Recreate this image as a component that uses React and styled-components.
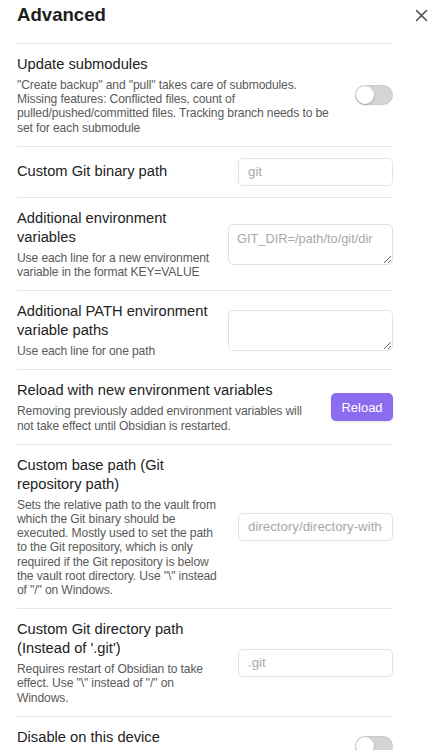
import styled, { createGlobalStyle } from "styled-components";

const GlobalStyle = createGlobalStyle`
  html, body {
    margin: 0;
    padding: 0;
    background: #ffffff;
  }
  body {
    font-family: "Liberation Sans", Arial, sans-serif;
    color: #222222;
    -webkit-font-smoothing: antialiased;
  }
`;

const Modal = styled.div`
  padding: 0 4px 0 17px;
`;

const Header = styled.header`
  display: flex;
  justify-content: space-between;
  align-items: center;
  height: 30px;
  margin-bottom: 13px;
`;

const Title = styled.h2`
  margin: 0;
  font-size: 18.6px;
  font-weight: 700;
  line-height: 30px;
  color: #1e1e1e;
`;

const CloseButton = styled.button`
  width: 20px;
  height: 20px;
  display: grid;
  place-items: center;
  border: 0;
  padding: 0;
  background: transparent;
  color: #4a4a4a;
`;

const Settings = styled.div`
  margin-right: 38px;
`;

const Item = styled.div`
  display: flex;
  align-items: center;
  gap: 16px;
  padding: 11px 0;
  border-top: 1px solid #e6e6e6;
`;

const Info = styled.div`
  flex: 1 1 0;
  min-width: 0;
`;

const Name = styled.div`
  font-size: 14.7px;
  line-height: 19px;
  color: #222222;
`;

const Description = styled.div`
  margin-top: 4px;
  font-size: 12.1px;
  line-height: 14.2px;
  letter-spacing: -0.12px;
  color: #5a5a5a;
`;

const Control = styled.div`
  flex: none;
  display: flex;
  justify-content: flex-end;
`;

const TextInput = styled.input`
  box-sizing: border-box;
  width: 155px;
  height: 28px;
  padding: 0 9px;
  border: 1px solid #e2e2e2;
  border-radius: 5px;
  background: #ffffff;
  font-family: inherit;
  font-size: 13.3px;
  color: #222;
  outline: none;

  &::placeholder {
    color: #a8a8a8;
  }
`;

const TextArea = styled.textarea`
  box-sizing: border-box;
  width: 165px;
  height: 41px;
  padding: 6px 8px;
  border: 1px solid #e2e2e2;
  border-radius: 5px;
  background: #ffffff;
  font-family: inherit;
  font-size: 12.8px;
  line-height: 16px;
  color: #222;
  outline: none;
  display: block;
  resize: vertical;

  &::placeholder {
    color: #a8a8a8;
  }
`;

const Toggle = styled.div`
  position: relative;
  width: 38px;
  height: 20px;
  border-radius: 10px;
  background: ${(p) => (p.$on ? "#8b6cef" : "#d4d4d4")};
  box-shadow: inset 0 0 0 1px rgba(0, 0, 0, 0.04);

  &::after {
    content: "";
    position: absolute;
    top: 1px;
    left: ${(p) => (p.$on ? "19px" : "1px")};
    width: 18px;
    height: 18px;
    border-radius: 50%;
    background: #ffffff;
    box-shadow: 0 1px 2px rgba(0, 0, 0, 0.25);
  }
`;

const AccentButton = styled.button`
  width: 62px;
  height: 28px;
  padding: 0;
  border: 0;
  border-radius: 5px;
  background: #8b6cef;
  color: #ffffff;
  font-family: inherit;
  font-size: 13px;
  box-shadow: 0 1px 2px rgba(0, 0, 0, 0.12);
`;

function CloseIcon() {
  return (
    <svg width="13" height="13" viewBox="0 0 13 13" fill="none">
      <path d="M1.5 1.5 11.5 11.5M11.5 1.5 1.5 11.5" stroke="currentColor" strokeWidth="1.5" strokeLinecap="round" />
    </svg>
  );
}

function Setting({ name, description, children }) {
  return (
    <Item>
      <Info>
        <Name>{name}</Name>
        {description && <Description>{description}</Description>}
      </Info>
      <Control>{children}</Control>
    </Item>
  );
}

export default function App() {
  return (
    <Modal>
      <GlobalStyle />
      <Header>
        <Title>Advanced</Title>
        <CloseButton type="button" aria-label="Close">
          <CloseIcon />
        </CloseButton>
      </Header>
      <Settings>
        <Setting
          name="Update submodules"
          description={
            '"Create backup" and "pull" takes care of submodules. Missing features: Conflicted files, count of pulled/pushed/committed files. Tracking branch needs to be set for each submodule'
          }
        >
          <Toggle />
        </Setting>
        <Setting name="Custom Git binary path">
          <TextInput placeholder="git" />
        </Setting>
        <Setting
          name="Additional environment variables"
          description="Use each line for a new environment variable in the format KEY=VALUE"
        >
          <TextArea placeholder="GIT_DIR=/path/to/git/dir" />
        </Setting>
        <Setting name="Additional PATH environment variable paths" description="Use each line for one path">
          <TextArea />
        </Setting>
        <Setting
          name="Reload with new environment variables"
          description="Removing previously added environment variables will not take effect until Obsidian is restarted."
        >
          <AccentButton type="button">Reload</AccentButton>
        </Setting>
        <Setting
          name="Custom base path (Git repository path)"
          description={
            'Sets the relative path to the vault from which the Git binary should be executed. Mostly used to set the path to the Git repository, which is only required if the Git repository is below the vault root directory. Use "\\" instead of "/" on Windows.'
          }
        >
          <TextInput placeholder="directory/directory-with-git-repo" />
        </Setting>
        <Setting
          name="Custom Git directory path (Instead of '.git')"
          description={'Requires restart of Obsidian to take effect. Use "\\" instead of "/" on Windows.'}
        >
          <TextInput placeholder=".git" />
        </Setting>
        <Setting name="Disable on this device" description="Disables the plugin on this device. This setting is not synced.">
          <Toggle />
        </Setting>
      </Settings>
    </Modal>
  );
}
